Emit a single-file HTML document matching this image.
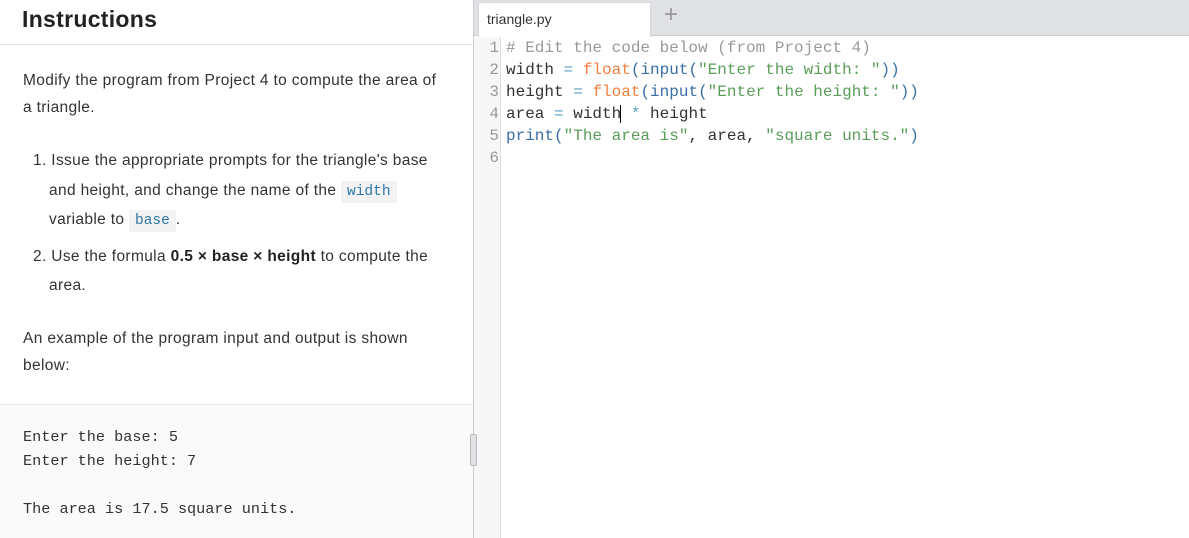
<!DOCTYPE html>
<html><head><style>
*{margin:0;padding:0;box-sizing:border-box}
body{width:1189px;height:538px;overflow:hidden;background:#fff;font-family:"Liberation Sans",sans-serif;color:#333;position:relative}
#left{position:absolute;left:0;top:0;width:474px;height:538px;border-right:1px solid #ccc}
h1{position:absolute;left:22px;top:6px;font-size:23px;font-weight:bold;color:#222;letter-spacing:0.3px}
.hb{position:absolute;left:0;top:44px;width:473px;border-top:1px solid #e5e5e5}
.t{position:absolute;left:23px;font-size:15.5px;color:#333;white-space:nowrap;letter-spacing:0.35px}
code{font-family:"Liberation Mono",monospace;color:#2d77a6;background:#f3f3f3;padding:3px 6px;font-size:14.5px;letter-spacing:0}
#pre{position:absolute;left:0;top:404px;width:473px;height:134px;background:#fafafa;border-top:1px solid #e6ebf0;font-family:"Liberation Mono",monospace;font-size:15.2px;color:#333}
#pre div{position:absolute;left:23px}
#tabs{position:absolute;left:474px;top:0;width:715px;height:36px;background:#dfe1e5;border-bottom:1px solid #ccc}
#tab{position:absolute;left:4px;top:2px;width:173px;height:35px;background:#fff;font-size:14px;padding:8px 8px;color:#333;border:1px solid #d8d8d8;border-bottom:none}
#plus{position:absolute;left:190px;top:1px;font-size:24px;color:#999;font-weight:300}
#gut{position:absolute;left:474px;top:37px;width:27px;height:501px;background:#f7f7f7;border-right:1px solid #ddd}
.code{position:absolute;left:474px;font-family:"Liberation Mono",monospace;font-size:16px;white-space:pre;color:#333}
.n{display:inline-block;width:25px;text-align:right;color:#999;margin-right:7px}
.c{color:#999}.s{color:#5a9e5a}.b{color:#f08040}.k{color:#3a6ea5}.o{color:#5aa0c0}
#handle{position:absolute;left:470px;top:434px;width:7px;height:32px;background:#e0e2e6;border:1px solid #bbb;border-radius:2px}
</style></head><body>
<div id="left">
<h1>Instructions</h1>
<div class="hb"></div>
<div class="t" style="top:72px">Modify the program from Project 4 to compute the area of</div>
<div class="t" style="top:99px">a triangle.</div>
<div class="t" style="top:152px;left:33px">1. Issue the appropriate prompts for the triangle's base</div>
<div class="t" style="top:182px;left:49px">and height, and change the name of the <code>width</code></div>
<div class="t" style="top:211px;left:49px">variable to <code>base</code>.</div>
<div class="t" style="top:248px;left:33px">2. Use the formula <b style="color:#222">0.5 × base × height</b> to compute the</div>
<div class="t" style="top:277px;left:49px">area.</div>
<div class="t" style="top:330px">An example of the program input and output is shown</div>
<div class="t" style="top:357px">below:</div>
<div id="pre"><div style="top:23px">Enter the base: 5</div><div style="top:47px">Enter the height: 7</div><div style="top:95px">The area is 17.5 square units.</div></div>
</div>
<div id="tabs"><div id="tab">triangle.py</div><div id="plus">+</div></div>
<div id="gut"></div>
<div id="handle"></div>
<div class="code" style="top:39px"><span class="n">1</span><span class="c"># Edit the code below (from Project 4)</span></div>
<div class="code" style="top:61px"><span class="n">2</span>width <span class="o">=</span> <span class="b">float</span><span class="k">(input(</span><span class="s">"Enter the width: "</span><span class="k">))</span></div>
<div class="code" style="top:83px"><span class="n">3</span>height <span class="o">=</span> <span class="b">float</span><span class="k">(input(</span><span class="s">"Enter the height: "</span><span class="k">))</span></div>
<div class="code" style="top:105px"><span class="n">4</span>area <span class="o">=</span> width<span style="border-left:1px solid #000;margin-left:-1px"></span> <span class="o">*</span> height</div>
<div class="code" style="top:127px"><span class="n">5</span><span class="k">print(</span><span class="s">"The area is"</span>, area, <span class="s">"square units."</span><span class="k">)</span></div>
<div class="code" style="top:149px"><span class="n">6</span></div>
</body></html>
